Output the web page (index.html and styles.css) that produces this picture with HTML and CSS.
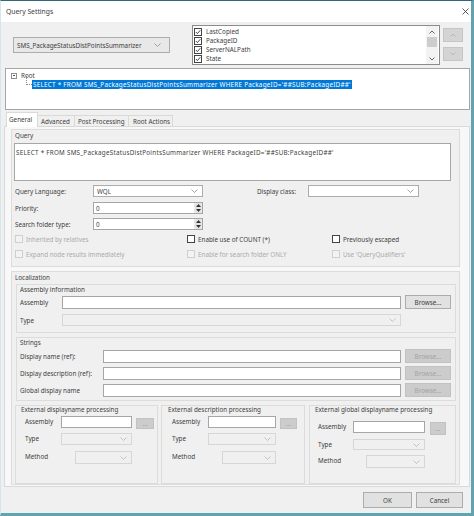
FILE: index.html
```html
<!DOCTYPE html>
<html>
<head>
<meta charset="utf-8">
<link rel="stylesheet" href="styles.css">
</head>
<body>
<div class="win">
  <div class="titlebar">
    <span class="title">Query Settings</span>
    <svg class="close" width="7" height="7" viewBox="0 0 7 7"><path d="M0.5 0.5L6.5 6.5M6.5 0.5L0.5 6.5" stroke="#333" stroke-width="0.8" fill="none"/></svg>
  </div>

  <div class="top">
    <div class="combo gray main">
      <span class="ctext">SMS_PackageStatusDistPointsSummarizer</span>
      <svg class="chev" width="7" height="4" viewBox="0 0 7 4"><path d="M0.5 0.5L3.5 3.5L6.5 0.5" fill="none" stroke="#8a8a8a" stroke-width="0.8"/></svg>
    </div>
    <div class="checklist">
      <div class="items">
        <div class="ci"><span class="cb"><svg width="6" height="6" viewBox="0 0 6 6"><path d="M0.8 3L2.4 4.6L5.3 1.2" fill="none" stroke="#333" stroke-width="0.9"/></svg></span><span>LastCopied</span></div>
        <div class="ci"><span class="cb"><svg width="6" height="6" viewBox="0 0 6 6"><path d="M0.8 3L2.4 4.6L5.3 1.2" fill="none" stroke="#333" stroke-width="0.9"/></svg></span><span>PackageID</span></div>
        <div class="ci"><span class="cb"><svg width="6" height="6" viewBox="0 0 6 6"><path d="M0.8 3L2.4 4.6L5.3 1.2" fill="none" stroke="#333" stroke-width="0.9"/></svg></span><span>ServerNALPath</span></div>
        <div class="ci"><span class="cb"><svg width="6" height="6" viewBox="0 0 6 6"><path d="M0.8 3L2.4 4.6L5.3 1.2" fill="none" stroke="#333" stroke-width="0.9"/></svg></span><span>State</span></div>
      </div>
      <div class="vscroll">
        <div class="sarrow"><svg width="6" height="4" viewBox="0 0 6 4"><path d="M0.5 3.5L3 1L5.5 3.5" fill="none" stroke="#555" stroke-width="0.9"/></svg></div>
        <div class="thumb"></div>
        <div class="strack"></div>
        <div class="sarrow"><svg width="6" height="4" viewBox="0 0 6 4"><path d="M0.5 0.5L3 3L5.5 0.5" fill="none" stroke="#555" stroke-width="0.9"/></svg></div>
      </div>
    </div>
    <div class="movebtns">
      <div class="mv"><svg width="6" height="4" viewBox="0 0 6 4"><path d="M0.5 3.5L3 1L5.5 3.5" fill="none" stroke="#b0b0b0" stroke-width="0.8"/></svg></div>
      <div class="mv"><svg width="6" height="4" viewBox="0 0 6 4"><path d="M0.5 0.5L3 3L5.5 0.5" fill="none" stroke="#b0b0b0" stroke-width="0.8"/></svg></div>
    </div>
  </div>

  <div class="tree">
    <div class="troot"><span class="exp"></span><span>Root</span></div>
    <div class="tchild"><span class="conn"></span><span class="sel sql">SELECT * FROM SMS_PackageStatusDistPointsSummarizer WHERE PackageID='##SUB:PackageID##'</span></div>
  </div>

  <div class="tabs">
    <div class="tab active t-gen">General</div>
    <div class="tab t-adv">Advanced</div>
    <div class="tab t-post">Post Processing</div>
    <div class="tab t-root">Root Actions</div>
  </div>

  <div class="panel">
    <div class="grp qgrp">
      <div class="glabel">Query</div>
      <div class="qtext"><span class="sql">SELECT * FROM SMS_PackageStatusDistPointsSummarizer WHERE PackageID='##SUB:PackageID##'</span></div>
      <div class="frow r1">
        <span class="flab w78">Query Language:</span>
        <div class="combo white w110"><span class="ctext">WQL</span><svg class="chev" width="7" height="4" viewBox="0 0 7 4"><path d="M0.5 0.5L3.5 3.5L6.5 0.5" fill="none" stroke="#8a8a8a" stroke-width="0.8"/></svg></div>
        <span class="flab dclab">Display class:</span>
        <div class="combo white w111"><span class="ctext"></span><svg class="chev" width="7" height="4" viewBox="0 0 7 4"><path d="M0.5 0.5L3.5 3.5L6.5 0.5" fill="none" stroke="#8a8a8a" stroke-width="0.8"/></svg></div>
      </div>
      <div class="frow r2">
        <span class="flab w78">Priority:</span>
        <div class="spin"><span class="ctext">0</span><span class="spbtn"><span class="sp"><svg width="5" height="3" viewBox="0 0 5 3"><path d="M0 3L2.5 0L5 3Z" fill="#333"/></svg></span><span class="sp"><svg width="5" height="3" viewBox="0 0 5 3"><path d="M0 0L2.5 3L5 0Z" fill="#333"/></svg></span></span></div>
      </div>
      <div class="frow r3">
        <span class="flab w78">Search folder type:</span>
        <div class="spin"><span class="ctext">0</span><span class="spbtn"><span class="sp"><svg width="5" height="3" viewBox="0 0 5 3"><path d="M0 3L2.5 0L5 3Z" fill="#333"/></svg></span><span class="sp"><svg width="5" height="3" viewBox="0 0 5 3"><path d="M0 0L2.5 3L5 0Z" fill="#333"/></svg></span></span></div>
      </div>
      <div class="crow c-r1">
        <span class="chk dis c1"><span class="box"></span>Inherited by relatives</span>
        <span class="chk c2"><span class="box"></span>Enable use of COUNT (*)</span>
        <span class="chk"><span class="box"></span>Previously escaped</span>
      </div>
      <div class="crow c-r2">
        <span class="chk dis c1"><span class="box"></span>Expand node results immediately</span>
        <span class="chk dis c2"><span class="box"></span>Enable for search folder ONLY</span>
        <span class="chk dis"><span class="box"></span>Use 'QueryQualifiers'</span>
      </div>
    </div>

    <div class="grp lgrp">
      <div class="glabel">Localization</div>
      <div class="sub asm">
        <div class="slabel">Assembly information</div>
        <div class="lrow a1">
          <span class="flab w42">Assembly</span>
          <div class="input w339"></div>
          <div class="btn browse">Browse...</div>
        </div>
        <div class="lrow a2">
          <span class="flab w42">Type</span>
          <div class="combo dis w339"><span class="ctext"></span><svg class="chev" width="7" height="4" viewBox="0 0 7 4"><path d="M0.5 0.5L3.5 3.5L6.5 0.5" fill="none" stroke="#b5b5b5" stroke-width="0.8"/></svg></div>
        </div>
      </div>
      <div class="sub str">
        <div class="slabel">Strings</div>
        <div class="lrow s1">
          <span class="flab w83">Display name (ref):</span>
          <div class="input w298"></div>
          <div class="btn browse dis">Browse...</div>
        </div>
        <div class="lrow s2">
          <span class="flab w83">Display description (ref):</span>
          <div class="input w298"></div>
          <div class="btn browse dis">Browse...</div>
        </div>
        <div class="lrow s2">
          <span class="flab w83">Global display name</span>
          <div class="input w298"></div>
          <div class="btn browse dis">Browse...</div>
        </div>
      </div>
      <div class="ext">
        <div class="egrp g1">
          <div class="elabel">External displayname processing</div>
          <div class="erow e-asm">
            <span class="flab w36">Assembly</span>
            <div class="input ein"></div>
            <div class="btn dots dis">...</div>
          </div>
          <div class="erow e-type">
            <span class="flab w36">Type</span>
            <div class="combo dis ein"><span class="ctext"></span><svg class="chev" width="7" height="4" viewBox="0 0 7 4"><path d="M0.5 0.5L3.5 3.5L6.5 0.5" fill="none" stroke="#b5b5b5" stroke-width="0.8"/></svg></div>
          </div>
          <div class="erow e-meth">
            <span class="flab w50">Method</span>
            <div class="combo dis emeth"><span class="ctext"></span><svg class="chev" width="7" height="4" viewBox="0 0 7 4"><path d="M0.5 0.5L3.5 3.5L6.5 0.5" fill="none" stroke="#b5b5b5" stroke-width="0.8"/></svg></div>
          </div>
        </div>
        <div class="egrp g2">
          <div class="elabel">External description processing</div>
          <div class="erow e-asm">
            <span class="flab w36">Assembly</span>
            <div class="input ein"></div>
            <div class="btn dots dis">...</div>
          </div>
          <div class="erow e-type">
            <span class="flab w36">Type</span>
            <div class="combo dis ein"><span class="ctext"></span><svg class="chev" width="7" height="4" viewBox="0 0 7 4"><path d="M0.5 0.5L3.5 3.5L6.5 0.5" fill="none" stroke="#b5b5b5" stroke-width="0.8"/></svg></div>
          </div>
          <div class="erow e-meth">
            <span class="flab w50">Method</span>
            <div class="combo dis emeth"><span class="ctext"></span><svg class="chev" width="7" height="4" viewBox="0 0 7 4"><path d="M0.5 0.5L3.5 3.5L6.5 0.5" fill="none" stroke="#b5b5b5" stroke-width="0.8"/></svg></div>
          </div>
        </div>
        <div class="egrp g3">
          <div class="elabel">External global displayname processing</div>
          <div class="erow e-asm">
            <span class="flab w35">Assembly</span>
            <div class="input ein"></div>
            <div class="btn dots dis">...</div>
          </div>
          <div class="erow e-type">
            <span class="flab w35">Type</span>
            <div class="combo dis ein"><span class="ctext"></span><svg class="chev" width="7" height="4" viewBox="0 0 7 4"><path d="M0.5 0.5L3.5 3.5L6.5 0.5" fill="none" stroke="#b5b5b5" stroke-width="0.8"/></svg></div>
          </div>
          <div class="erow e-meth">
            <span class="flab w48">Method</span>
            <div class="combo dis emeth"><span class="ctext"></span><svg class="chev" width="7" height="4" viewBox="0 0 7 4"><path d="M0.5 0.5L3.5 3.5L6.5 0.5" fill="none" stroke="#b5b5b5" stroke-width="0.8"/></svg></div>
          </div>
        </div>
      </div>
    </div>
  </div>

  <div class="footer">
    <div class="btn ok">OK</div>
    <div class="btn cancel">Cancel</div>
  </div>
</div>
</body>
</html>
```

FILE: styles.css
```css
* { box-sizing: border-box; }
html, body { margin: 0; padding: 0; }
body {
  font-family: "Noto Sans", "Open Sans", sans-serif;
  font-size: 6.3px;
  color: #404040;
  background: #f0f0f0;
  width: 474px;
  height: 516px;
  overflow: hidden;
}
.win {
  width: 474px;
  height: 516px;
  background: #f0f0f0;
  border-top: 1px solid #2f6878;
  border-left: 1px solid #d5e6ec;
  border-right: 3px solid #62a3b2;
  border-bottom: 3px solid #62a3b2;
  display: flex;
  flex-direction: column;
  overflow: hidden;
}
.sql { letter-spacing: 0.25px; }

/* title bar */
.titlebar {
  height: 21px;
  flex: none;
  background: #fff;
  display: flex;
  align-items: center;
  padding-left: 5px;
}
.title { font-size: 6.8px; color: #3a3a3a; }
.close { margin-left: auto; margin-right: 2px; }

/* top section */
.top {
  height: 46px;
  flex: none;
  display: flex;
  align-items: flex-start;
}
.combo {
  display: flex;
  align-items: center;
  border: 1px solid #adadad;
  background: #fff;
  height: 12px;
}
.combo .ctext { flex: 1; padding-left: 3px; white-space: nowrap; overflow: hidden; }
.combo .chev { margin-right: 4px; flex: none; }
.combo.gray { background: #e8e8e8; }
.combo.dis { background: #f0f0f0; border-color: #d6d6d6; }
.main {
  margin-left: 12px;
  margin-top: 15px;
  width: 157px;
  height: 16px;
}
.main .chev { margin-right: 8px; }
.checklist {
  margin-left: 22px;
  margin-top: 3px;
  width: 248px;
  height: 40px;
  border: 1px solid #8c8c8c;
  background: #fff;
  display: flex;
}
.items { flex: 1; padding-top: 1px; padding-left: 1px; }
.ci { height: 9px; display: flex; align-items: center; }
.cb {
  width: 8px; height: 8px;
  border: 1px solid #444;
  background: #fff;
  margin-right: 4px;
  display: flex; align-items: center; justify-content: center;
}
.vscroll {
  width: 12px;
  margin: 0 1px 0 0;
  background: #f3f3f3;
  display: flex;
  flex-direction: column;
  align-items: center;
}
.sarrow { height: 11px; display: flex; align-items: center; justify-content: center; }
.thumb { width: 10px; height: 10px; background: #cdcdcd; }
.strack { flex: 1; }
.movebtns {
  margin-left: 3px;
  margin-top: 6px;
  display: flex;
  flex-direction: column;
  gap: 5px;
}
.mv {
  width: 20px; height: 14px;
  background: #d4d4d4;
  border: 1px solid #c6c6c6;
  display: flex; align-items: center; justify-content: center;
}

/* tree */
.tree {
  flex: none;
  margin-left: 4px;
  width: 465px;
  height: 42px;
  border: 1px solid #a6a6a6;
  background: #fff;
  padding: 2px 0 0 5px;
}
.troot { height: 9px; display: flex; align-items: center; }
.exp {
  width: 6px; height: 6px;
  border: 1px solid #8f8f8f;
  margin-right: 4px;
  display: flex; align-items: center; justify-content: center;
}
.exp::after { content: ""; width: 2px; height: 1px; background: #555; }
.tchild { height: 10px; display: flex; align-items: flex-start; margin-left: 15px; }
.conn {
  width: 6px; height: 9px;
  margin-top: -4px;
  border-left: 1px dotted #8a8a8a;
  border-bottom: 1px dotted #8a8a8a;
}
.sel {
  background: #0078d7;
  color: #fff;
  height: 9px;
  line-height: 9px;
  padding: 0 1px;
  white-space: nowrap;
}

/* tabs */
.tabs {
  flex: none;
  margin-top: 2px;
  height: 15px;
  display: flex;
  align-items: flex-end;
  padding-left: 5px;
}
.tab {
  height: 12px;
  border: 1px solid #d9d9d9;
  border-bottom: none;
  background: #f0f0f0;
  line-height: 11px;
  white-space: nowrap;
  margin-left: -1px;
}
.tab.active {
  height: 15px;
  background: #fff;
  position: relative;
  z-index: 1;
  line-height: 13px;
  margin-left: 0;
}
.t-gen { width: 32px; padding-left: 2px; }
.t-adv { width: 38px; padding-left: 3px; }
.t-post { width: 55px; padding-left: 3px; }
.t-root { width: 45px; padding-left: 4px; }

/* panel */
.panel {
  flex: none;
  margin-top: -1px;
  margin-left: 3px;
  width: 466px;
  height: 361px;
  border: 1px solid #d9d9d9;
  background: #f8f8f8;
  padding: 2px 0 0 6px;
}
.grp {
  width: 449px;
  border: 1px solid #dcdcdc;
  background: #f0f0f0;
}
.qgrp { height: 138px; }
.lgrp { height: 214px; margin-top: 4px; }
.glabel { margin-left: 3px; margin-top: 1px; height: 9px; line-height: 9px; }
.qtext {
  margin-left: 2px;
  margin-top: 3px;
  width: 437px;
  height: 38px;
  border: 1px solid #a6a6a6;
  background: #fff;
  padding: 4px 0 0 1px;
  line-height: 9px;
  white-space: nowrap;
}
.frow {
  display: flex;
  align-items: center;
  height: 12px;
  padding-left: 3px;
}
.r1 { margin-top: 4px; }
.r2 { margin-top: 5px; }
.r3 { margin-top: 4px; }
.flab { flex: none; white-space: nowrap; }
.w78 { width: 78px; }
.w110 { width: 110px; }
.w111 { width: 111px; }
.dclab { width: 93px; text-align: right; margin-right: 12px; }
.spin {
  width: 110px; height: 12px;
  border: 1px solid #a6a6a6;
  background: #fff;
  display: flex;
  align-items: center;
}
.spin .ctext { flex: 1; padding-left: 2px; }
.spbtn {
  width: 8px; height: 10px;
  display: flex; flex-direction: column;
}
.sp {
  flex: 1;
  background: #e6e6e6;
  display: flex; align-items: center; justify-content: center;
}
.crow {
  display: flex;
  align-items: center;
  height: 10px;
  padding-left: 3px;
}
.c-r1 { margin-top: 4px; }
.c-r2 { margin-top: 5px; }
.chk { display: flex; align-items: center; white-space: nowrap; }
.chk .box {
  width: 8px; height: 8px;
  border: 1px solid #444;
  background: #fff;
  margin-right: 3px;
  flex: none;
}
.chk.dis { color: #ababab; }
.chk.dis .box { border-color: #cfcfcf; background: #f3f3f3; }
.c1 { width: 172px; }
.c2 { width: 145px; }

/* localization */
.sub {
  margin-left: 4px;
  width: 440px;
  border: 1px solid #dcdcdc;
}
.asm { margin-top: 2px; height: 49px; }
.str { margin-top: 4px; height: 64px; }
.slabel { margin-left: 3px; height: 9px; line-height: 9px; }
.lrow { display: flex; align-items: center; height: 14px; padding-left: 3px; }
.a1 { margin-top: 1px; }
.a2 { margin-top: 4px; }
.s1 { margin-top: 2px; }
.s2 { margin-top: 3px; }
.w42 { width: 42px; }
.w83 { width: 83px; }
.w36 { width: 36px; }
.w35 { width: 35px; }
.w50 { width: 50px; }
.w48 { width: 48px; }
.input {
  height: 13px;
  border: 1px solid #a6a6a6;
  background: #fff;
  flex: none;
}
.w339 { width: 339px; }
.w298 { width: 298px; }
.btn {
  display: flex; align-items: center; justify-content: center;
  background: #e1e1e1;
  border: 1px solid #adadad;
  white-space: nowrap;
  flex: none;
}
.btn.dis { background: #cccccc; border-color: #c2c2c2; color: #a3a3a3; }
.browse { width: 46px; height: 14px; margin-left: 4px; }
.lrow .combo { height: 12px; }

.ext { display: flex; margin-top: 4px; margin-left: 3px; height: 79px; }
.egrp { height: 79px; border: 1px solid #dcdcdc; }
.g1 { width: 143px; }
.g2 { width: 144px; margin-left: 3px; }
.g3 { width: 147px; margin-left: 4px; }
.elabel { height: 9px; line-height: 9px; margin-top: -1px; white-space: nowrap; }
.g1 .elabel { margin-left: 5px; }
.g2 .elabel { margin-left: 6px; }
.g3 .elabel { margin-left: 5px; }
.erow { display: flex; align-items: flex-start; }
.erow .flab { height: 12px; line-height: 12px; }
.g1 .erow { padding-left: 9px; }
.g2 .erow { padding-left: 10px; }
.g3 .erow { padding-left: 8px; }
.e-asm { margin-top: 2px; }
.e-type { margin-top: 4px; }
.e-meth { margin-top: 6px; }
.ein { height: 12px; }
.g1 .ein { width: 71px; }
.g2 .ein { width: 68px; }
.g3 .ein { width: 72px; }
.emeth { height: 13px; }
.g1 .emeth { width: 57px; }
.g2 .emeth { width: 54px; }
.g3 .emeth { width: 59px; }
.dots { height: 11px; margin-top: 2px; margin-left: 4px; width: 18px; background: #e3e3e3; border-color: #cdcdcd; }
.g2 .dots { width: 17px; }
.g3 .dots { width: 16px; height: 13px; margin-top: 1px; margin-left: 5px; }
.g3 .e-asm { margin-top: 7px; }
.g3 .e-type { margin-top: 4px; }
.g3 .e-type .ein { height: 11px; }
.g3 .e-meth { margin-top: 4px; }

/* footer */
.footer {
  flex: none;
  margin-top: 5px;
  height: 16px;
  display: flex;
  justify-content: flex-end;
  gap: 4px;
  padding-right: 8px;
}
.ok { width: 49px; height: 16px; }
.cancel { width: 47px; height: 16px; }
```
